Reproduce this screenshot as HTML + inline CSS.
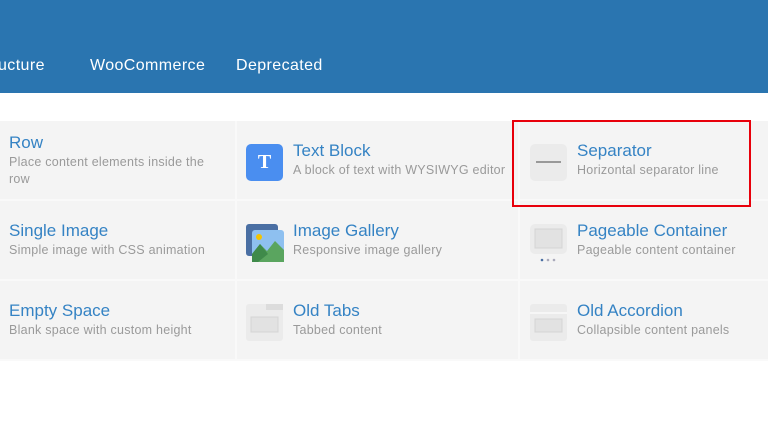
<!DOCTYPE html>
<html><head><style>
body{margin:0;width:768px;height:426px;overflow:hidden;background:#fff;font-family:"Liberation Sans",sans-serif;position:relative}
.hd{position:absolute;left:0;top:0;width:768px;height:93px;background:#2a75b0}
.nav{position:absolute;top:57px;color:#fff;font-size:16px;letter-spacing:0.4px}
.grid{position:absolute;top:121px;left:0;width:768px;height:240px;background:#f9f9f9}
.c{position:absolute;background:#f4f4f4;height:78px}
.t{position:absolute;color:#3583c4;font-size:17px;white-space:nowrap}
.d{position:absolute;color:#9a9a9a;font-size:12.5px;line-height:17px;letter-spacing:0.25px}
.ic{position:absolute;width:37px;height:37px;border-radius:5px;background:#ebebeb}
.red{position:absolute;left:512px;top:120px;width:235px;height:83px;border:2px solid #e8000b}
</style></head><body>
<div class="hd"></div>
<div class="nav" style="left:-2px">ucture</div>
<div class="nav" style="left:90px">WooCommerce</div>
<div class="nav" style="left:236px">Deprecated</div>
<div class="grid">
<div class="c" style="left:0;top:0;width:235px"></div>
<div class="c" style="left:237px;top:0;width:281px"></div>
<div class="c" style="left:520px;top:0;width:248px"></div>
<div class="c" style="left:0;top:80px;width:235px"></div>
<div class="c" style="left:237px;top:80px;width:281px"></div>
<div class="c" style="left:520px;top:80px;width:248px"></div>
<div class="c" style="left:0;top:160px;width:235px"></div>
<div class="c" style="left:237px;top:160px;width:281px"></div>
<div class="c" style="left:520px;top:160px;width:248px"></div>
</div>
<div class="t" style="left:9px;top:133px">Row</div>
<div class="d" style="left:9px;top:154px;width:205px">Place content elements inside the row</div>
<div class="t" style="left:9px;top:221px">Single Image</div>
<div class="d" style="left:9px;top:242px">Simple image with CSS animation</div>
<div class="t" style="left:9px;top:301px">Empty Space</div>
<div class="d" style="left:9px;top:322px">Blank space with custom height</div>

<div class="ic" style="left:246px;top:144px;background:#4a8ef0;color:#fff;font:bold 20px 'Liberation Serif',serif;text-align:center;line-height:37px">T</div>
<div class="t" style="left:293px;top:141px">Text Block</div>
<div class="d" style="left:293px;top:162px">A block of text with WYSIWYG editor</div>
<svg style="position:absolute;left:246px;top:224px" width="38" height="38"><rect x="0" y="0" width="32" height="32" rx="3" fill="#4a6fa3"/><rect x="6" y="6" width="32" height="32" rx="3" fill="#8ec0f0"/><circle cx="13" cy="13" r="3" fill="#f3c300"/><path d="M6 38 L6 30 L14 20 L21 27 L29 17 L38 26 L38 38Z" fill="#5aa55f"/><path d="M6 30 L14 20 L22 30 L12 38 L6 38Z" fill="#3f8a4a"/></svg>
<div class="t" style="left:293px;top:221px">Image Gallery</div>
<div class="d" style="left:293px;top:242px">Responsive image gallery</div>
<svg style="position:absolute;left:246px;top:304px" width="38" height="38"><rect x="0" y="0" width="37" height="37" rx="3" fill="#ebebeb"/><rect x="20" y="0" width="17" height="6" fill="#dcdcdc"/><rect x="5" y="13" width="27" height="15" fill="#e2e2e2" stroke="#d4d4d4"/></svg>
<div class="t" style="left:293px;top:301px">Old Tabs</div>
<div class="d" style="left:293px;top:322px">Tabbed content</div>

<svg style="position:absolute;left:530px;top:144px" width="38" height="38"><rect width="37" height="37" rx="5" fill="#ebebeb"/><rect x="6" y="17" width="25" height="2" fill="#999"/></svg>
<div class="t" style="left:577px;top:141px">Separator</div>
<div class="d" style="left:577px;top:162px">Horizontal separator line</div>
<svg style="position:absolute;left:530px;top:224px" width="38" height="40"><rect width="37" height="30" rx="5" fill="#ebebeb"/><rect x="5" y="5" width="27" height="19" fill="#e2e2e2" stroke="#d4d4d4"/><circle cx="12" cy="36" r="1.3" fill="#4a6fa3"/><circle cx="18" cy="36" r="1.3" fill="#aab"/><circle cx="24" cy="36" r="1.3" fill="#aab"/></svg>
<div class="t" style="left:577px;top:221px">Pageable Container</div>
<div class="d" style="left:577px;top:242px">Pageable content container</div>
<svg style="position:absolute;left:530px;top:304px" width="38" height="38"><rect width="37" height="37" rx="3" fill="#ebebeb"/><rect x="0" y="8" width="37" height="2" fill="#f6f6f6"/><rect x="5" y="15" width="27" height="13" fill="#e2e2e2" stroke="#d4d4d4"/></svg>
<div class="t" style="left:577px;top:301px">Old Accordion</div>
<div class="d" style="left:577px;top:322px">Collapsible content panels</div>
<div class="red"></div>
</body></html>
